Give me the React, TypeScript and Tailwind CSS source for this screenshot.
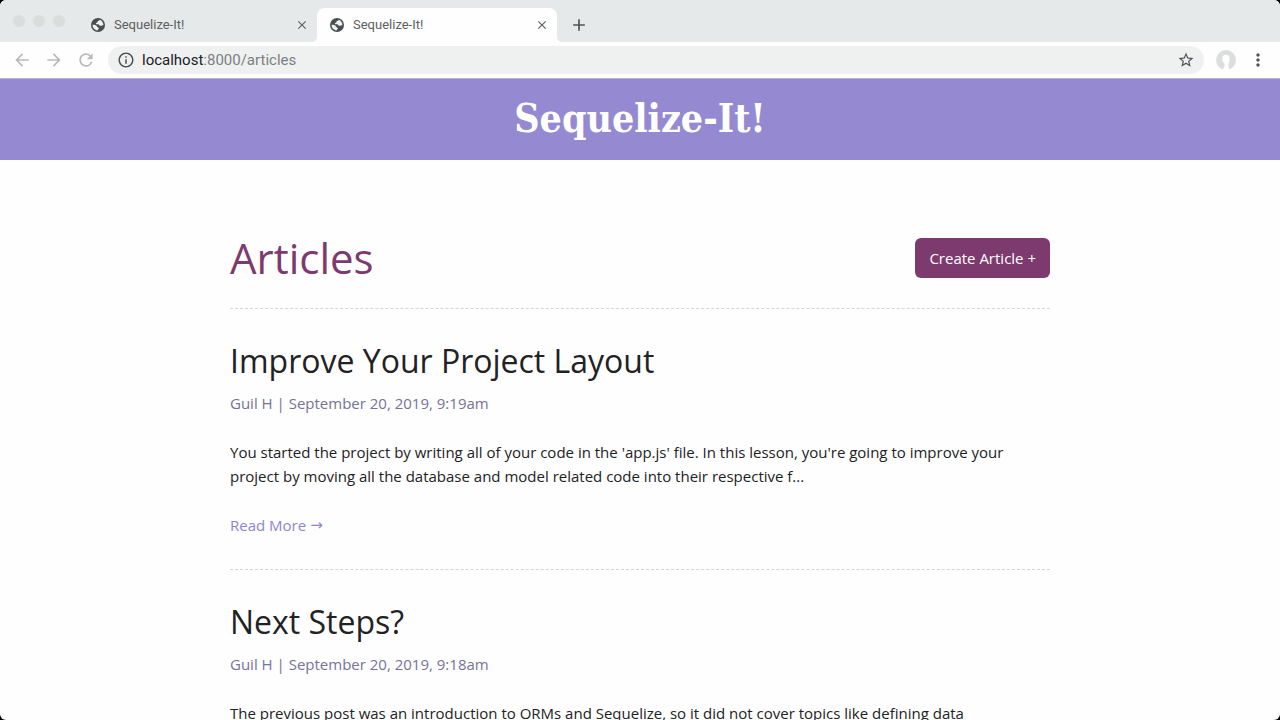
import React from 'react'
import {
  MdArrowBack,
  MdArrowForward,
  MdRefresh,
  MdClose,
  MdAdd,
  MdInfoOutline,
  MdStarBorder,
  MdMoreVert,
} from 'react-icons/md'

const articles = [
  {
    title: 'Improve Your Project Layout',
    meta: 'Guil H | September 20, 2019, 9:19am',
    body: "You started the project by writing all of your code in the 'app.js' file. In this lesson, you're going to improve your project by moving all the database and model related code into their respective f...",
  },
  {
    title: 'Next Steps?',
    meta: 'Guil H | September 20, 2019, 9:18am',
    body: 'The previous post was an introduction to ORMs and Sequelize, so it did not cover topics like defining data',
  },
]

const Globe = () => (
  <svg className="h-4 w-4 shrink-0" viewBox="0 0 16 16" aria-hidden="true">
    <circle cx="8" cy="8" r="7" fill="#4b4e51" />
    <path
      d="M9.8 2.700C9.200 3.900 8.400 3.600 7.700 4.200 7.200 4.800 7.700 5.300 6.800 5.700 5.900 6.100 5.600 6.900 6.300 7.300H8.300C9.300 7.300 9.100 8.700 10.100 8.800 11.400 8.900 12.100 8.300 13.400 8.300 13.500 5.700 12 3.500 9.800 2.700ZM2.600 7.800C4.400 7.700 6.700 8.200 7 9.600 7.300 10.700 8.800 10.300 8.800 11.400 8.700 12.300 7.700 12.300 7.600 13.400 4.800 13.300 2.500 10.800 2.600 7.800Z"
      fill="#f0f2f2"
    />
  </svg>
)

// the little curves where the open tab meets the toolbar
const TabFoot = () => (
  <>
    <svg
      className="absolute bottom-0 -left-1.5 h-1.5 w-1.5"
      viewBox="0 0 6 6"
      aria-hidden="true"
    >
      <path d="M6 0V6H0Q6 6 6 0Z" fill="#fefefe" />
    </svg>
    <svg
      className="absolute -right-1.5 bottom-0 h-1.5 w-1.5"
      viewBox="0 0 6 6"
      aria-hidden="true"
    >
      <path d="M0 0V6H6Q0 6 0 0Z" fill="#fefefe" />
    </svg>
  </>
)

const Tab = ({ active }: { active?: boolean }) => (
  <div
    className={
      active
        ? 'relative flex h-[34px] w-60 items-center rounded-t-lg bg-[#fefefe] pr-2 pl-3'
        : 'flex h-[34px] w-[239px] items-center pr-2 pl-3'
    }
  >
    {active && <TabFoot />}
    <Globe />
    <span className="ml-2 grow text-[13px] text-[#5c6063]">Sequelize-It!</span>
    <button aria-label="Close tab" className="text-sm text-[#5c6063]">
      <MdClose />
    </button>
  </div>
)

const Browser = () => (
  <div className="font-['Roboto',sans-serif]">
    <div className="flex h-[42px] items-end bg-[#e6e9e9]">
      <div className="flex h-[42px] w-[78px] items-center gap-2 pl-[13px]">
        <span className="h-3 w-3 rounded-full bg-[#dbdddd]" />
        <span className="h-3 w-3 rounded-full bg-[#dbdddd]" />
        <span className="h-3 w-3 rounded-full bg-[#dbdddd]" />
      </div>
      <Tab />
      <Tab active />
      <button
        aria-label="New tab"
        className="flex h-[34px] w-11 items-center justify-center text-xl text-[#505356]"
      >
        <MdAdd />
      </button>
    </div>
    <div className="flex h-[37px] items-center border-b border-[#b5b3c4] bg-[#fefefe] px-3">
      <div className="flex gap-3 text-xl text-[#b9bbbb]">
        <button aria-label="Back">
          <MdArrowBack />
        </button>
        <button aria-label="Forward">
          <MdArrowForward />
        </button>
        <button aria-label="Reload">
          <MdRefresh />
        </button>
      </div>
      <div className="ml-3 flex h-7 grow items-center rounded-full bg-[#eff1f1] px-[9px]">
        <MdInfoOutline className="text-lg text-[#505356]" />
        <div className="ml-[7px] grow text-[15px] text-[#7b7f82]">
          <span className="text-[#202124]">localhost</span>:8000/articles
        </div>
        <button aria-label="Bookmark" className="text-lg text-[#505356]">
          <MdStarBorder />
        </button>
      </div>
      <button aria-label="Profile" className="ml-3">
        <svg className="h-5 w-5" viewBox="0 0 20 20">
          <circle cx="10" cy="10" r="10" fill="#dcdede" />
          <path
            d="M6.500 8C6.500 5.800 8 4.800 10 4.800S13.500 5.800 13.500 8V10C13.500 11.500 12.800 12.500 12.500 13V16L13.500 20H6.500L8.500 16V13.500C7 12.500 6.500 11.500 6.500 10Z"
            fill="#fefefe"
          />
        </svg>
      </button>
      <button aria-label="Menu" className="ml-3 text-xl text-[#505356]">
        <MdMoreVert />
      </button>
    </div>
  </div>
)

const App = () => {
  return (
    <div className="h-screen bg-black">
      <div className="h-full overflow-hidden rounded-md bg-[#fefefe] text-[#222225]">
        <Browser />
        <div className="font-['Open_Sans',sans-serif] text-[15px] leading-6">
          <header className="flex h-[81px] items-center justify-center bg-[#958ad2] pb-1">
            <a
              href="#"
              className="font-['DejaVu_Serif_Condensed','DejaVu_Serif',serif] text-[39px] leading-12 font-bold text-white"
            >
              Sequelize-It!
            </a>
          </header>
          <main className="mx-auto max-w-[820px] pt-[68px]">
            <div className="flex items-center justify-between border-b border-dashed border-[#d3d6d6] pb-5">
              <h1 className="text-[42px] leading-[60px] text-[#7d3a6f]">
                Articles
              </h1>
              <a
                href="#"
                className="rounded-md bg-[#7d3a6f] px-[14px] py-2 font-medium text-white"
              >
                Create Article +
              </a>
            </div>
            {articles.map((article) => (
              <article
                key={article.title}
                className="border-b border-dashed border-[#d3d6d6] py-8"
              >
                <h2 className="text-[32px] leading-10">{article.title}</h2>
                <p className="mt-[10px] text-[#757399]">{article.meta}</p>
                <p className="mt-[25px]">{article.body}</p>
                <a
                  href="#"
                  className="mt-[25px] flex w-fit gap-1 text-[#8f85cf]"
                >
                  Read More
                  <span className="font-['DejaVu_Sans',sans-serif]">→</span>
                </a>
              </article>
            ))}
          </main>
        </div>
      </div>
    </div>
  )
}

export default App
